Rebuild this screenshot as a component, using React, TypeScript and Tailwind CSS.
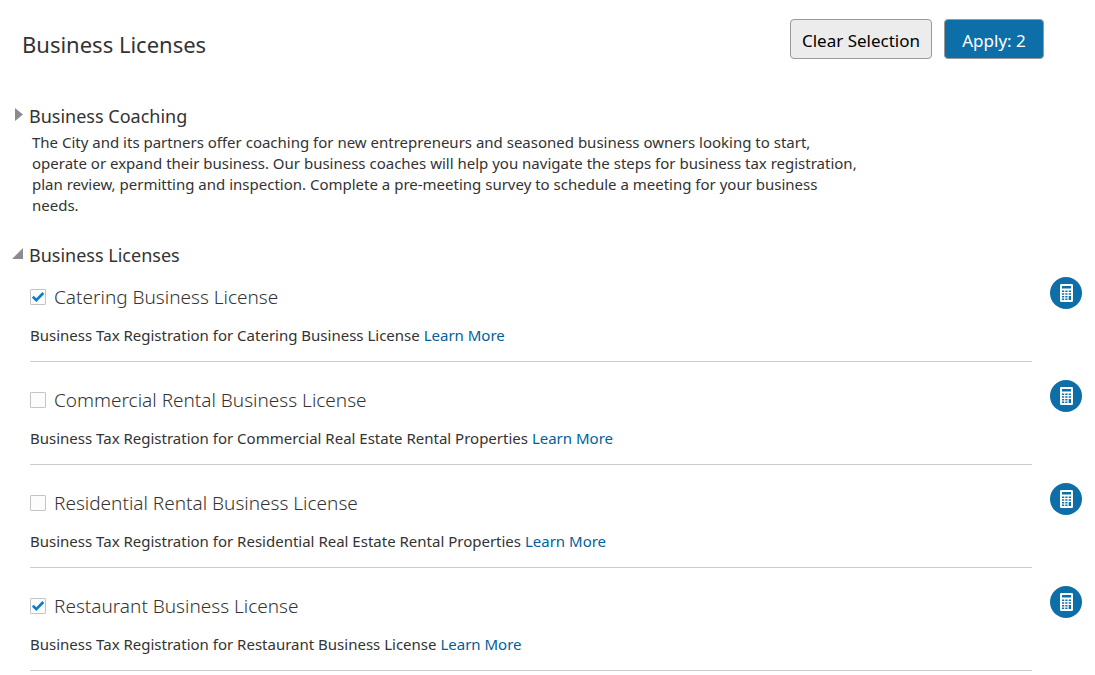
import { useState } from 'react';

const licenses = [
  {
    id: 'catering',
    title: 'Catering Business License',
    description: 'Business Tax Registration for Catering Business License',
  },
  {
    id: 'commercial-rental',
    title: 'Commercial Rental Business License',
    description: 'Business Tax Registration for Commercial Real Estate Rental Properties',
  },
  {
    id: 'residential-rental',
    title: 'Residential Rental Business License',
    description: 'Business Tax Registration for Residential Real Estate Rental Properties',
  },
  {
    id: 'restaurant',
    title: 'Restaurant Business License',
    description: 'Business Tax Registration for Restaurant Business License',
  },
];

function CalculatorIcon() {
  return (
    <svg className="h-[18px] w-[13px]" viewBox="0 0 13 18" aria-hidden="true">
      <rect width="13" height="18" rx="1.2" fill="#fff" />
      <path
        fill="#0e6fa8"
        d="M2 2h9v2.6H2zM2 6.4h2.2v1.6H2zM5.3 6.4h2.2v1.6H5.3zM8.7 6.4H11v1.6H8.7zM2 9.2h2.2v1.6H2zM5.3 9.2h2.2v1.6H5.3zM8.7 9.2H11v1.6H8.7zM2 12h2.2v1.5H2zM5.3 12h2.2v1.5H5.3zM2 14.5h2.2v1.4H2zM5.3 14.5h2.2v1.4H5.3zM8.7 12H11v3.9H8.7z"
      />
    </svg>
  );
}

function Checkbox({ checked, onChange }: { checked: boolean; onChange: () => void }) {
  return (
    <span className="grid h-4 w-4 place-items-center">
      <input
        type="checkbox"
        checked={checked}
        onChange={onChange}
        className="col-start-1 row-start-1 h-4 w-4 appearance-none rounded-[1px] border border-[#c4c4c4] bg-[#fcfcfc]"
      />
      {checked && (
        <svg
          className="pointer-events-none col-start-1 row-start-1 h-3 w-3"
          viewBox="0 0 12 12"
          fill="none"
          aria-hidden="true"
        >
          <path d="M.8 5.6l3.5 3.6L11.3 2" stroke="#0a7ccf" strokeWidth="2.6" />
        </svg>
      )}
    </span>
  );
}

export default function App() {
  const [selected, setSelected] = useState(['catering', 'restaurant']);
  const [coachingOpen, setCoachingOpen] = useState(false);
  const [licensesOpen, setLicensesOpen] = useState(true);

  function toggle(id: string) {
    setSelected((prev) => (prev.includes(id) ? prev.filter((s) => s !== id) : [...prev, id]));
  }

  return (
    <main className="bg-white pl-3 pr-[13px] font-['Noto_Sans',sans-serif] text-[#333]">
      <header className="flex items-start justify-between pt-[19px] pl-[10px] pr-[38px]">
        <h1 className="pt-[9px] text-[22px] leading-8">Business Licenses</h1>
        <div className="flex gap-3">
          <button
            onClick={() => setSelected([])}
            className="h-10 w-[142px] rounded-[4px] border border-[#999] bg-[#ececec] pt-1 text-[17px] leading-6 text-black"
          >
            Clear Selection
          </button>
          <button className="h-10 w-[100px] rounded-[4px] border border-[#999] bg-[#0e6fa8] pt-1 text-[17px] leading-6 text-white">
            Apply: {selected.length}
          </button>
        </div>
      </header>

      {/* Coaching */}
      <section className="pt-10">
        <h2 className="text-[18px] leading-8">
          <button
            aria-expanded={coachingOpen}
            onClick={() => setCoachingOpen(!coachingOpen)}
            className="flex items-center gap-[6px]"
          >
            <svg className="mb-1 h-[13px] w-[11px]" viewBox="0 0 11 13" aria-hidden="true">
              <path d="M3 0l8 6.5L3 13z" fill="#8a8d90" />
            </svg>
            Business Coaching
          </button>
        </h2>
        <p className="max-w-[850px] pl-5 text-[15px] leading-[21px]">
          The City and its partners offer coaching for new entrepreneurs and seasoned business owners looking to start,
          operate or expand their business. Our business coaches will help you navigate the steps for business tax
          registration, plan review, permitting and inspection. Complete a pre-meeting survey to schedule a meeting for
          your business needs.
        </p>
      </section>

      {/* Licenses */}
      <section className="pt-[23px]">
        <h2 className="text-[18px] leading-8">
          <button
            aria-expanded={licensesOpen}
            onClick={() => setLicensesOpen(!licensesOpen)}
            className="flex items-center gap-[6px]"
          >
            <svg className="mb-1 h-[13px] w-[11px]" viewBox="0 0 11 13" aria-hidden="true">
              <path d="M11 1v11H0z" fill="#8a8d90" />
            </svg>
            Business Licenses
          </button>
        </h2>
        {licensesOpen && (
          <ul className="flex flex-col gap-3 pl-[18px]">
            {licenses.map((license) => (
              <li key={license.id} className="flex items-start gap-[18px]">
                <div className="grow border-b border-[#ccc] pt-[10px] pb-[15px]">
                  <label className="flex items-center gap-2 text-[19px] font-light leading-8">
                    <Checkbox checked={selected.includes(license.id)} onChange={() => toggle(license.id)} />
                    {license.title}
                  </label>
                  <p className="pt-3 text-[15px] leading-[21px]">
                    {license.description}{' '}
                    <a href="#" className="text-[#005f9e]">
                      Learn More
                    </a>
                  </p>
                </div>
                <button
                  aria-label={`Estimate fees for ${license.title}`}
                  className="mt-[6px] flex h-8 w-8 shrink-0 items-center justify-center rounded-full bg-[#0e6fa8]"
                >
                  <CalculatorIcon />
                </button>
              </li>
            ))}
          </ul>
        )}
      </section>
    </main>
  );
}
